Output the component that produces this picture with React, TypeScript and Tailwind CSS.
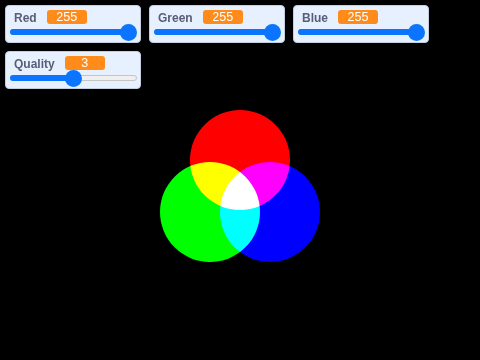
import React from 'react';

interface SliderMonitorProps {
  label: string;
  value: number;
  min: number;
  max: number;
}

// Scratch-style slider monitor: label, orange value pill, range bar underneath
function SliderMonitor({ label, value, min, max }: SliderMonitorProps) {
  const pct = ((value - min) / (max - min)) * 100;
  return (
    <div className="w-[136px] h-[38px] rounded-[4px] border border-[#c3cfe0] bg-[#e6f0ff] flex flex-col">
      <div className="flex items-center gap-[10px] pl-[8px] pt-[3px] h-[15px] box-content">
        <span className="mt-[2px] text-[12px] font-bold leading-none text-[#575e75]">{label}</span>
        <span className="w-[40px] h-[14px] rounded-[3px] bg-[#ff8c1a] text-white text-[12.5px] leading-[14px] text-center">
          {value}
        </span>
      </div>
      <div className="relative ml-[4px] mr-[3px] mt-[5px] h-[6px]">
        <div className="absolute inset-0 rounded-full border border-[#c4c4c4] bg-[#efefef]" />
        <div
          className="absolute left-0 top-0 h-[6px] rounded-full bg-[#0b75ff]"
          style={{ width: `calc(${pct / 100} * (100% - 17px) + 8px)` }}
        />
        <div
          className="absolute top-[-5.5px] w-[17px] h-[17px] rounded-full bg-[#0b75ff]"
          style={{ left: `calc(${pct / 100} * (100% - 17px))` }}
        />
      </div>
    </div>
  );
}

export default function App() {
  return (
    <div
      className="relative w-[480px] h-[360px] bg-black overflow-hidden"
      style={{ fontFamily: '"Liberation Sans", Arial, Helvetica, sans-serif' }}
    >
      {/* RGB additive colour circles */}
      <svg className="absolute inset-0" width="480" height="360" viewBox="0 0 480 360">
        <rect width="480" height="360" fill="#000" />
        <circle cx="240" cy="160" r="50" fill="#ff0000" className="mix-blend-screen" />
        <circle cx="210" cy="212" r="50" fill="#00ff00" className="mix-blend-screen" />
        <circle cx="270" cy="212" r="50" fill="#0000ff" className="mix-blend-screen" />
      </svg>

      {/* Monitors */}
      <div className="relative flex flex-col gap-[8px] p-[5px]">
        <div className="flex gap-[8px]">
          <SliderMonitor label="Red" value={255} min={0} max={255} />
          <SliderMonitor label="Green" value={255} min={0} max={255} />
          <SliderMonitor label="Blue" value={255} min={0} max={255} />
        </div>
        <div className="flex">
          <SliderMonitor label="Quality" value={3} min={1} max={5} />
        </div>
      </div>
    </div>
  );
}
